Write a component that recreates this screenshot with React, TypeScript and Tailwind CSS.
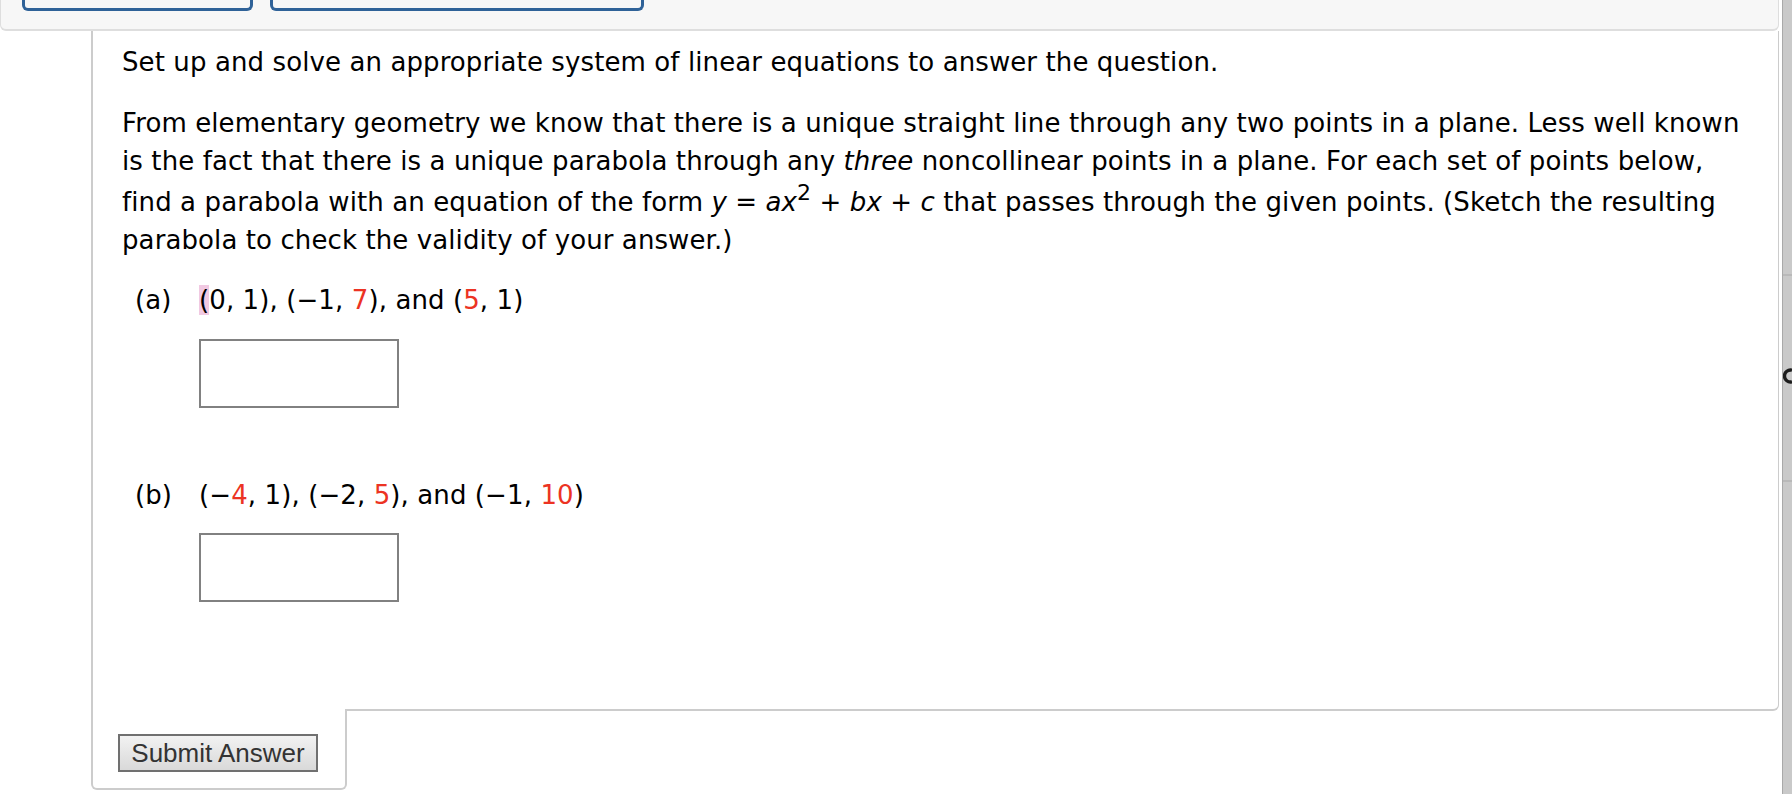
const red = "text-[#ec3323]";

function Points({ label, children }: { label: string; children: React.ReactNode }) {
  return (
    <div className="flex h-[38px] items-center leading-[38px] pl-[13px]">
      <span className="w-[64px] shrink-0">{label}</span>
      <span>{children}</span>
    </div>
  );
}

function AnswerBox() {
  return <div className="ml-[77px] w-[200px] h-[69px] border-2 border-[#818181] bg-white" />;
}

function SideStrip() {
  return (
    <div className="flex h-[794px] w-[10px] flex-col border-l border-[#a9a9a9] bg-[#c9c9c9]">
      <div className="h-[274px]" />
      <div className="h-[2px] bg-[#b9b9b9]" />
      <div className="h-[91px]" />
      <svg width="9" height="18" viewBox="0 0 9 18" className="shrink-0">
        <path d="M9 3.2 A6 6 0 1 0 9 14.8" fill="none" stroke="#1c1c1c" strokeWidth="3.4" />
      </svg>
      <div className="h-[95px]" />
      <div className="h-[2px] bg-[#b9b9b9]" />
      <div className="flex-1" />
    </div>
  );
}

export default function App() {
  return (
    <div className="flex h-[794px] w-[1792px] overflow-hidden bg-white font-['DejaVu_Sans',Verdana,sans-serif] text-[26px] tracking-[0.1px] text-black">
      <div className="w-[1779px] shrink-0">
        {/* top band with the two tab bottoms */}
        <div className="flex h-[31px] gap-[17px] rounded-b-md border-x border-b-2 border-[#dedede] bg-[#f7f7f7] pl-[21px]">
          <div className="h-[11px] w-[231px] rounded-b-[6px] border-[3px] border-t-0 border-[#2f6298]" />
          <div className="h-[11px] w-[374px] rounded-b-[6px] border-[3px] border-t-0 border-[#2f6298]" />
        </div>

        {/* question card */}
        <div className="ml-[91px] h-[680px] rounded-br-md border-b-2 border-l-2 border-r border-[#cccccc] pl-[29px] pr-[20px] pt-[12px]">
          <p className="leading-[38px]">
            Set up and solve an appropriate system of linear equations to answer the question.
          </p>

          <div className="mt-[23px] leading-[38px]">
            <div>
              From elementary geometry we know that there is a unique straight line through any two points in a plane. Less well known
            </div>
            <div>
              is the fact that there is a unique parabola through any <i>three</i> noncollinear points in a plane. For each set of points below,
            </div>
            <div className="mt-[3px]">
              find a parabola with an equation of the form <i>y</i> = <i>ax</i>
              <span className="relative -top-[11px] text-[22px] leading-none">2</span> + <i>bx</i> + <i>c</i> that passes through the given points. (Sketch the resulting
            </div>
            <div>parabola to check the validity of your answer.)</div>
          </div>

          <div className="mt-[22px]">
            <Points label="(a)">
              <span className="bg-[#f1c9e2]">(</span>0, 1), (−1, <span className={red}>7</span>), and (<span className={red}>5</span>, 1)
            </Points>
          </div>
          <div className="mt-[20px]">
            <AnswerBox />
          </div>

          <div className="mt-[68px]">
            <Points label="(b)">
              (−<span className={red}>4</span>, 1), (−2, <span className={red}>5</span>), and (−1, <span className={red}>10</span>)
            </Points>
          </div>
          <div className="mt-[19px]">
            <AnswerBox />
          </div>
        </div>

        {/* submit tab below the card */}
        <div className="relative -mt-[2px] ml-[91px] h-[81px] w-[256px] rounded-b-md border-x-2 border-b-2 border-[#cccccc] bg-white pl-[25px] pt-[25px]">
          <button className="h-[38px] w-[200px] border-2 border-[#707070] bg-gradient-to-b from-[#f2f2f2] to-[#d9d9d9] font-['Liberation_Sans',Arial,sans-serif] text-[26px] leading-none tracking-normal text-[#333333]">
            Submit Answer
          </button>
        </div>
      </div>

      <div className="w-[3px] shrink-0" />
      <SideStrip />
    </div>
  );
}
